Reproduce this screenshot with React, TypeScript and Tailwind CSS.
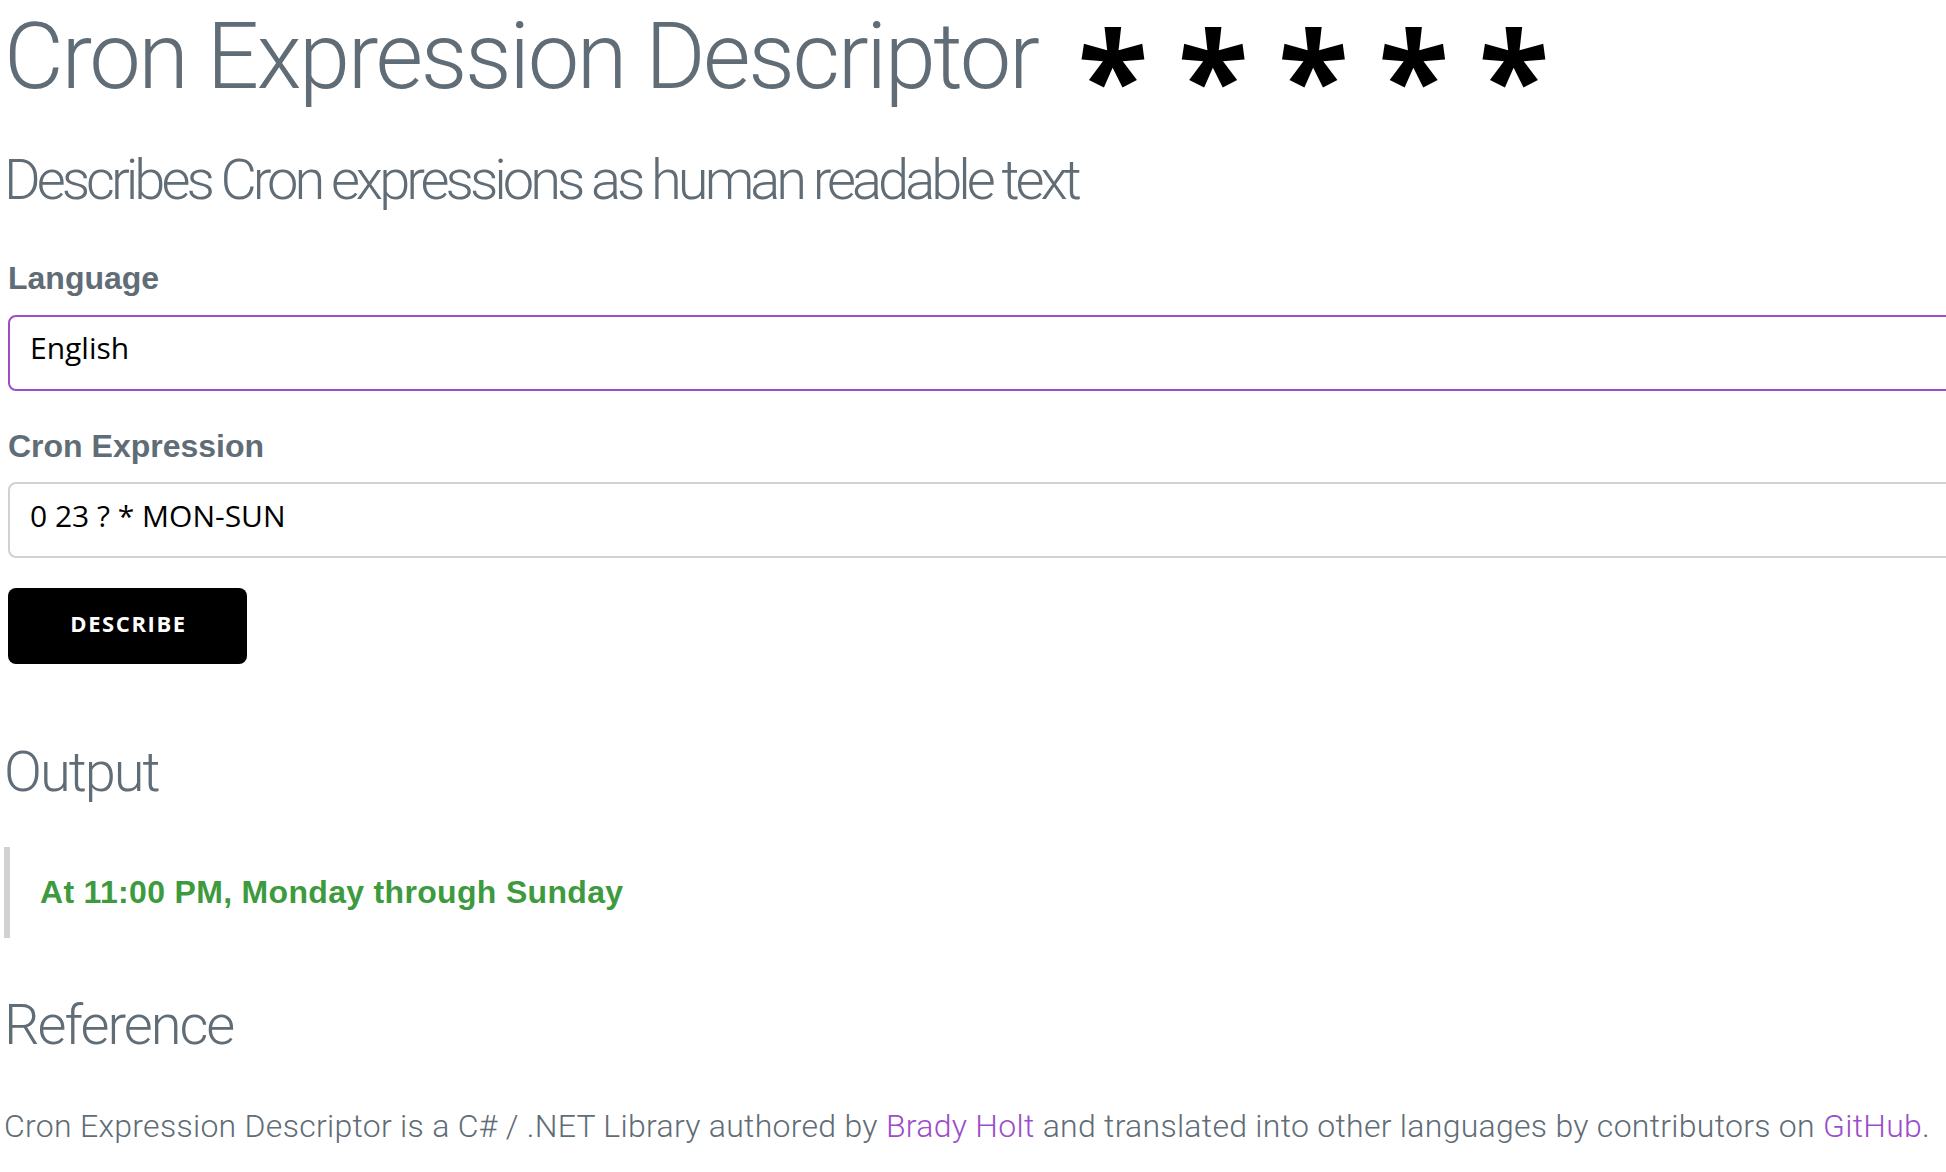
export default function App() {
  return (
    <div className="min-h-screen w-full overflow-hidden bg-white pt-[2px] text-[#606c76]">
      <div className="pl-[4px]">
        <h1 className="-mb-[21px] flex items-start whitespace-nowrap font-['Roboto',sans-serif] text-[92px] font-light leading-[110px] tracking-[-2.35px]">
          <span>Cron Expression Descriptor</span>
          <span className="-mt-[17px] ml-[40px] whitespace-pre font-['Open_Sans',sans-serif] text-[130px] font-bold leading-[180px] tracking-[-2.2px] text-black">
            * * * * *
          </span>
        </h1>
        <h3 className="mb-[36px] whitespace-nowrap font-['Roboto',sans-serif] text-[56px] font-light leading-[73px] tracking-[-4px]">
          Describes Cron expressions as human readable text
        </h3>

        <form className="pl-[4px]" onSubmit={(e) => e.preventDefault()}>
          <label className="mb-[11px] block font-['Liberation_Sans',sans-serif] text-[32px] font-bold leading-[51px]">
            Language
          </label>
          <div className="mb-[30px] box-border h-[76px] w-[2100px] rounded-[8px] border-2 border-[#9b4dca] bg-white px-[20px] pt-[11px] font-['Open_Sans',sans-serif] text-[30px] leading-[40px] text-black">
            English
          </div>

          <label className="mb-[10px] block font-['Liberation_Sans',sans-serif] text-[32px] font-bold leading-[51px]">
            Cron Expression
          </label>
          <div className="mb-[30px] box-border h-[76px] w-[2100px] rounded-[8px] border-2 border-[#d1d1d1] bg-white px-[20px] pt-[12px] font-['Open_Sans',sans-serif] text-[30px] leading-[40px] text-black">
            0 23 ? * MON-SUN
          </div>

          <button
            type="submit"
            className="mb-[72px] flex h-[76px] w-[239px] items-center justify-center rounded-[8px] bg-black pb-[5px] pl-[2px] font-['Open_Sans',sans-serif] text-[22px] font-bold uppercase tracking-[1.6px] text-white"
          >
            Describe
          </button>
        </form>

        <h3 className="mb-[38px] font-['Roboto',sans-serif] text-[56px] font-light leading-[73px] tracking-[-2px]">
          Output
        </h3>
        <blockquote className="mb-[51px] border-l-[6px] border-[#d1d1d1] py-[20px] pl-[30px]">
          <p className="font-['Liberation_Sans',sans-serif] text-[32px] font-bold leading-[51px] tracking-[0.32px] text-[#3e9a3e]">
            At 11:00 PM, Monday through Sunday
          </p>
        </blockquote>

        <h3 className="mb-[39px] font-['Roboto',sans-serif] text-[56px] font-light leading-[73px] tracking-[-2px]">
          Reference
        </h3>
        <p className="whitespace-nowrap font-['Roboto',sans-serif] text-[32px] font-light leading-[51px] tracking-[0.28px]">
          Cron Expression Descriptor is a C# / .NET Library authored by{' '}
          <a href="#" className="text-[#9b4dca]">
            Brady Holt
          </a>{' '}
          and translated into other languages by contributors on{' '}
          <a href="#" className="text-[#9b4dca]">
            GitHub
          </a>
          .
        </p>
      </div>
    </div>
  );
}
